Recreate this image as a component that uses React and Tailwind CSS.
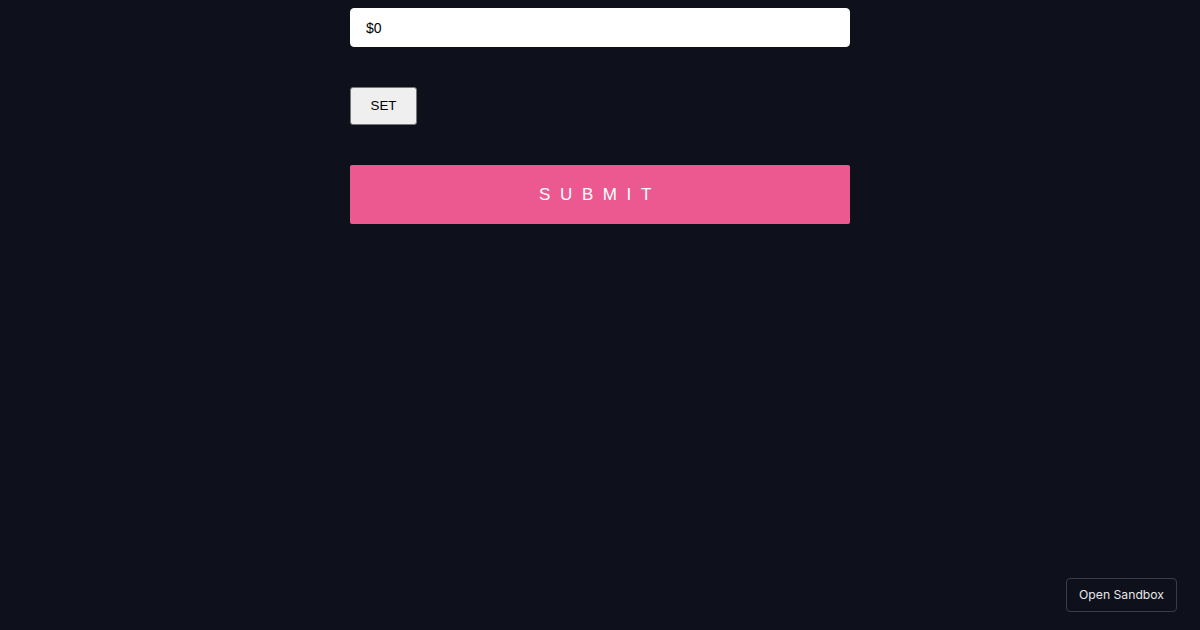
export default function App() {
  return (
    <div className="min-h-[630px] w-full bg-[#0e101c] relative" style={{ fontFamily: '"Liberation Sans", Arial, sans-serif' }}>
      <div className="mx-auto w-[500px] pt-2 flex flex-col">
        <input
          readOnly
          value="$0"
          className="block w-full box-border rounded border border-white bg-white px-[15px] py-[10px] h-[39px] text-[14px] leading-4 text-black outline-none"
          style={{ fontFamily: '"Liberation Sans", Arial, sans-serif' }}
        />
        <div className="mt-[40px]">
          <button className="h-[38px] w-[67px] rounded-[3px] border border-[#767676] bg-[#efefef] text-[13.33px] text-black">
            SET
          </button>
        </div>
        <button className="mt-[40px] h-[59px] w-full bg-[#ec5990] text-white text-[17px] font-thin tracking-[9.6px] rounded-[2px]">
          SUBMIT
        </button>
      </div>
      <button
        className="absolute right-[23px] bottom-[18px] h-[34px] w-[111px] rounded-[4px] border border-[#3b3d44] bg-[#0e101c] text-[12.2px] text-[#e8e8e8]"
        style={{ fontFamily: 'Inter, "Noto Sans", sans-serif' }}
      >
        Open Sandbox
      </button>
    </div>
  );
}
